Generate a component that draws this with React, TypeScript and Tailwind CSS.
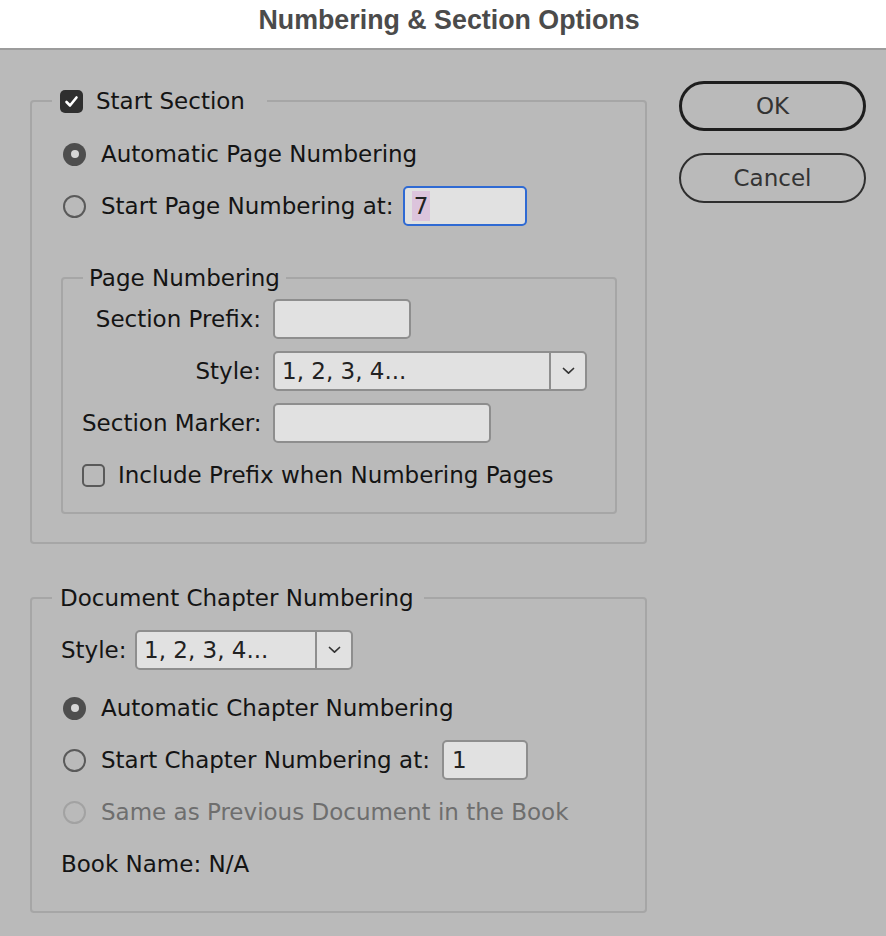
import React from "react";

type RState = "on" | "off" | "disabled";

function Radio({ state }: { state: RState }) {
  if (state === "on") {
    return (
      <div className="w-[23px] h-[23px] shrink-0 rounded-full bg-[#4e4e4e] flex items-center justify-center">
        <div className="w-[8px] h-[8px] rounded-full bg-[#d6d6d6]" />
      </div>
    );
  }
  if (state === "disabled") {
    return <div className="w-[23px] h-[23px] shrink-0 rounded-full border-2 border-[#a2a2a2]" />;
  }
  return <div className="w-[23px] h-[23px] shrink-0 rounded-full border-2 border-[#5a5a5a]" />;
}

function Checkbox({ checked }: { checked: boolean }) {
  if (checked) {
    return (
      <div className="w-[23px] h-[23px] shrink-0 rounded-[5px] bg-[#2f2f2f] flex items-center justify-center">
        <svg width="15" height="13" viewBox="0 0 15 13">
          <path d="M2.5 7 L6 10.5 L12.5 2.5" fill="none" stroke="#ffffff" strokeWidth="2.6" strokeLinecap="round" strokeLinejoin="round" />
        </svg>
      </div>
    );
  }
  return <div className="w-[23px] h-[23px] shrink-0 rounded-[5px] border-2 border-[#5a5a5a]" />;
}

function Select({ width, value }: { width: string; value: string }) {
  return (
    <div className={`${width} h-[40px] flex border-2 border-[#8e8e8e] rounded-[5px] bg-[#e1e1e1]`}>
      <div className="flex-1 flex items-center pl-[7px] text-[#222]">{value}</div>
      <div className="w-[36px] border-l-2 border-[#8e8e8e] flex items-center justify-center">
        <svg width="13" height="8" viewBox="0 0 13 8">
          <path d="M1.5 1.5 L6.5 6.2 L11.5 1.5" fill="none" stroke="#333333" strokeWidth="1.7" strokeLinecap="round" strokeLinejoin="round" />
        </svg>
      </div>
    </div>
  );
}

function TextBox({ width, children }: { width: string; children?: React.ReactNode }) {
  return (
    <div className={`${width} h-[40px] flex items-center pl-[8px] border-2 border-[#8e8e8e] rounded-[5px] bg-[#e1e1e1] text-[#222]`}>
      {children}
    </div>
  );
}

export default function App() {
  return (
    <div className="w-[886px] h-[936px] overflow-hidden bg-[#bababa] font-['DejaVu_Sans',sans-serif] text-[23px] leading-[28px] text-[#141414]">
      {/* Title bar */}
      <div className="h-[50px] bg-white border-b-2 border-[#9c9c9c] flex justify-center pt-[4px] pl-[12px]">
        <span className="font-['Liberation_Sans',sans-serif] font-bold text-[26.8px] leading-[32px] text-[#4b4b4b]">
          Numbering &amp; Section Options
        </span>
      </div>

      <div className="flex">
        {/* Left column */}
        <div className="w-[617px] ml-[30px] pt-[37px]">
          {/* Start Section */}
          <fieldset className="border-2 border-[#a6a6a6] rounded-[4px]">
            <legend className="ml-[20px] pl-[8px] pr-[22px] h-[28px] flex items-center gap-[13px]">
              <Checkbox checked />
              <span>Start Section</span>
            </legend>
            <div className="pl-[29px] pr-[28px] pt-[19px] pb-[28px]">
              <div className="ml-[2px] h-[40px] flex items-center gap-[15px]">
                <Radio state="on" />
                <span>Automatic Page Numbering</span>
              </div>
              <div className="ml-[2px] mt-[12px] h-[40px] flex items-center gap-[15px]">
                <Radio state="off" />
                <span>Start Page Numbering at:</span>
                <div className="w-[124px] h-[40px] flex items-center pl-[7px] border-2 border-[#2f6ad3] rounded-[5px] bg-[#e1e1e1] text-[#222] -ml-[6px]">
                  <span className="bg-[#dcc4dc] px-[2px] leading-[30px]">7</span>
                </div>
              </div>

              {/* Page Numbering */}
              <fieldset className="mt-[38px] border-2 border-[#a6a6a6] rounded-[4px]">
                <legend className="ml-[20px] px-[6px] h-[28px] flex items-center">
                  <span>Page Numbering</span>
                </legend>
                <div className="pl-[19px] pt-[7px] pb-[17px]">
                  <div className="grid grid-cols-[179px_1fr] gap-x-[12px] gap-y-[12px] items-center">
                    <div className="text-right whitespace-nowrap">Section Prefix:</div>
                    <TextBox width="w-[138px]" />
                    <div className="text-right whitespace-nowrap">Style:</div>
                    <Select width="w-[314px]" value="1, 2, 3, 4..." />
                    <div className="text-right whitespace-nowrap">Section Marker:</div>
                    <TextBox width="w-[218px]" />
                  </div>
                  <div className="mt-[12px] h-[40px] flex items-center gap-[13px]">
                    <Checkbox checked={false} />
                    <span>Include Prefix when Numbering Pages</span>
                  </div>
                </div>
              </fieldset>
            </div>
          </fieldset>

          {/* Document Chapter Numbering */}
          <fieldset className="mt-[40px] border-2 border-[#a6a6a6] rounded-[4px]">
            <legend className="ml-[20px] pl-[8px] pr-[10px] h-[28px] flex items-center">
              <span>Document Chapter Numbering</span>
            </legend>
            <div className="pl-[29px] pt-[18px] pb-[27px]">
              <div className="h-[40px] flex items-center">
                <span className="w-[74px]">Style:</span>
                <Select width="w-[218px]" value="1, 2, 3, 4..." />
              </div>
              <div className="ml-[2px] mt-[18px] h-[40px] flex items-center gap-[15px]">
                <Radio state="on" />
                <span>Automatic Chapter Numbering</span>
              </div>
              <div className="ml-[2px] mt-[12px] h-[40px] flex items-center gap-[15px]">
                <Radio state="off" />
                <span>Start Chapter Numbering at:</span>
                <TextBox width="w-[86px] -ml-[3px]">1</TextBox>
              </div>
              <div className="ml-[2px] mt-[12px] h-[40px] flex items-center gap-[15px] text-[#6e6e6e]">
                <Radio state="disabled" />
                <span>Same as Previous Document in the Book</span>
              </div>
              <div className="mt-[12px] h-[40px] flex items-center">
                <span>Book Name: N/A</span>
              </div>
            </div>
          </fieldset>
        </div>

        {/* Right column */}
        <div className="ml-[32px] pt-[31px] w-[187px] flex flex-col gap-[22px]">
          <button className="h-[50px] rounded-full border-[3px] border-[#1e1e1e] text-[#333] flex items-center justify-center">
            OK
          </button>
          <button className="h-[50px] rounded-full border-2 border-[#2e2e2e] text-[#333] flex items-center justify-center">
            Cancel
          </button>
        </div>
      </div>
    </div>
  );
}
